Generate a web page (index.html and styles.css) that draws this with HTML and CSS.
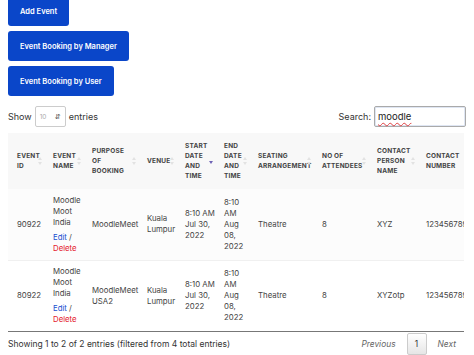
FILE: index.html
```html
<!DOCTYPE html>
<html>
<head>
<meta charset="utf-8">
<link rel="stylesheet" href="styles.css">
</head>
<body>
<div class="page">
  <div class="actions">
    <button class="btn">Add Event</button>
    <button class="btn">Event Booking by Manager</button>
    <button class="btn">Event Booking by User</button>
  </div>
  <div class="controls">
    <label class="length">Show <span class="select"><span class="sel-val">10</span><span class="sel-arrow">&#8693;</span></span> entries</label>
    <label class="search">Search: <span class="input"><span class="typed">moodle</span></span></label>
  </div>
  <div class="table-wrap">
    <table class="data">
      <colgroup>
        <col class="w1"><col class="w2"><col class="w3"><col class="w4"><col class="w5">
        <col class="w6"><col class="w7"><col class="w8"><col class="w9"><col class="w10">
      </colgroup>
      <thead>
        <tr>
          <th class="sortable">EVENT<br>ID<span class="sort"></span></th>
          <th class="sortable">EVENT<br>NAME<span class="sort"></span></th>
          <th class="sortable">PURPOSE<br>OF<br>BOOKING<span class="sort"></span></th>
          <th class="sortable">VENUE<span class="sort"></span></th>
          <th class="sortable">START<br>DATE<br>AND<br>TIME<span class="sort desc"></span></th>
          <th class="sortable">END<br>DATE<br>AND<br>TIME<span class="sort"></span></th>
          <th class="sortable">SEATING<br>ARRANGEMENT<span class="sort"></span></th>
          <th class="sortable">NO OF<br>ATTENDEES<span class="sort"></span></th>
          <th class="sortable">CONTACT<br>PERSON<br>NAME<span class="sort"></span></th>
          <th>CONTACT<br>NUMBER</th>
        </tr>
      </thead>
      <tbody>
        <tr class="odd">
          <td>90922</td>
          <td><div>Moodle<br>Moot<br>India</div><div class="links"><a class="edit">Edit</a> /<br><a class="delete">Delete</a></div></td>
          <td>MoodleMeet</td>
          <td>Kuala<br>Lumpur</td>
          <td>8:10 AM<br>Jul 30,<br>2022</td>
          <td>8:10<br>AM<br>Aug<br>08,<br>2022</td>
          <td>Theatre</td>
          <td>8</td>
          <td>XYZ</td>
          <td>1234567895</td>
        </tr>
        <tr class="even">
          <td>80922</td>
          <td><div>Moodle<br>Moot<br>India</div><div class="links"><a class="edit">Edit</a> /<br><a class="delete">Delete</a></div></td>
          <td>MoodleMeet<br>USA2</td>
          <td>Kuala<br>Lumpur</td>
          <td>8:10 AM<br>Jul 30,<br>2022</td>
          <td>8:10<br>AM<br>Aug<br>08,<br>2022</td>
          <td>Theatre</td>
          <td>8</td>
          <td>XYZotp</td>
          <td>1234567895</td>
        </tr>
      </tbody>
    </table>
  </div>
  <div class="footer">
    <div class="info">Showing 1 to 2 of 2 entries (filtered from 4 total entries)</div>
    <div class="paging">
      <span class="pg disabled">Previous</span>
      <span class="pg current">1</span>
      <span class="pg disabled">Next</span>
    </div>
  </div>
</div>
</body>
</html>
```
FILE: styles.css
```css
* { box-sizing: border-box; }
html, body { margin: 0; padding: 0; background: #fff; }
body {
  font-family: Inter, "Noto Sans", "DejaVu Sans", sans-serif;
  font-size: 7.8px;
  color: #444;
  overflow: hidden;
}
.page {
  width: 474px;
  padding: 0 8px;
  margin-top: -4px;
}
.actions {
  display: flex;
  flex-direction: column;
  align-items: flex-start;
  gap: 5px;
}
.btn {
  font-family: inherit;
  font-size: 7.5px;
  font-weight: 600;
  color: #fff;
  background: #0a46c9;
  border: none;
  border-radius: 3px;
  height: 30px;
  padding: 0 12px;
  cursor: pointer;
}
.controls {
  display: flex;
  justify-content: space-between;
  align-items: center;
  margin-top: 10px;
  height: 21px;
  font-size: 9px;
  color: #333;
}
.length, .search {
  display: flex;
  align-items: center;
  gap: 3px;
}
.select {
  display: inline-flex;
  align-items: center;
  justify-content: space-between;
  width: 31px;
  height: 21px;
  border: 1px solid #ccc;
  border-radius: 2px;
  padding: 0 4px;
  font-size: 6.5px;
  color: #aaa;
}
.sel-arrow { color: #555; font-size: 7px; }
.input {
  display: inline-flex;
  align-items: center;
  width: 92px;
  height: 21px;
  border: 1px solid #aaa;
  border-radius: 2px;
  padding: 0 3px;
  font-size: 9.5px;
  color: #222;
  box-shadow: inset 0 0 0 1px #dfe6f3;
}
.typed {
  text-decoration: underline wavy #e04040;
  text-decoration-thickness: 1px;
  text-underline-offset: 2px;
}
.table-wrap {
  width: 456px;
  overflow: hidden;
  margin-top: 6px;
}
.data {
  border-collapse: collapse;
  table-layout: fixed;
  width: 474px;
}
.w1 { width: 36px; }
.w2 { width: 39px; }
.w3 { width: 55px; }
.w4 { width: 38px; }
.w5 { width: 39px; }
.w6 { width: 34px; }
.w7 { width: 64px; }
.w8 { width: 55px; }
.w9 { width: 49px; }
.w10 { width: 65px; }
th, td {
  text-align: left;
  vertical-align: middle;
  white-space: nowrap;
  padding: 0 0 0 9px;
}
thead th {
  position: relative;
  background: #f8f8f8;
  font-size: 6.5px;
  font-weight: 700;
  line-height: 10px;
  letter-spacing: 0.2px;
  color: #444;
  height: 56px;
}
.sort {
  position: absolute;
  right: 2px;
  top: 50%;
  width: 4px;
  height: 8px;
  margin-top: -4px;
}
.sort::before, .sort::after {
  content: "";
  position: absolute;
  left: 0;
  border-left: 2px solid transparent;
  border-right: 2px solid transparent;
}
.sort::before { top: 0; border-bottom: 3px solid #e2e2e2; }
.sort::after { bottom: 0; border-top: 3px solid #e2e2e2; }
.sort.desc::before { display: none; }
.sort.desc::after { border-top-color: #6e63b5; bottom: 1px; }
tbody td {
  line-height: 11px;
  height: 71px;
  color: #444;
}
tbody tr.odd td { background: #fcfcfc; border-bottom: 1px solid #f0f0f0; }
tbody tr.even td { background: #fff; border-bottom: 1px solid #777; }
.links { margin-top: 4px; }
.edit { color: #1a4fd0; }
.delete { color: #e4202c; }
.footer {
  display: flex;
  justify-content: space-between;
  align-items: center;
  width: 456px;
  height: 24px;
  font-size: 8.5px;
  color: #333;
}
.paging {
  display: flex;
  align-items: center;
}
.pg {
  padding: 0 8px;
  font-size: 8.4px;
}
.pg.disabled { font-style: italic; color: #666; }
.pg.current {
  display: inline-flex;
  align-items: center;
  justify-content: center;
  width: 20px;
  height: 22px;
  padding: 0;
  margin: 0 3px;
  border: 1px solid #ccc;
  border-radius: 2px;
  background: linear-gradient(#fff, #e6e6e6);
  color: #333;
  font-style: normal;
}
```
